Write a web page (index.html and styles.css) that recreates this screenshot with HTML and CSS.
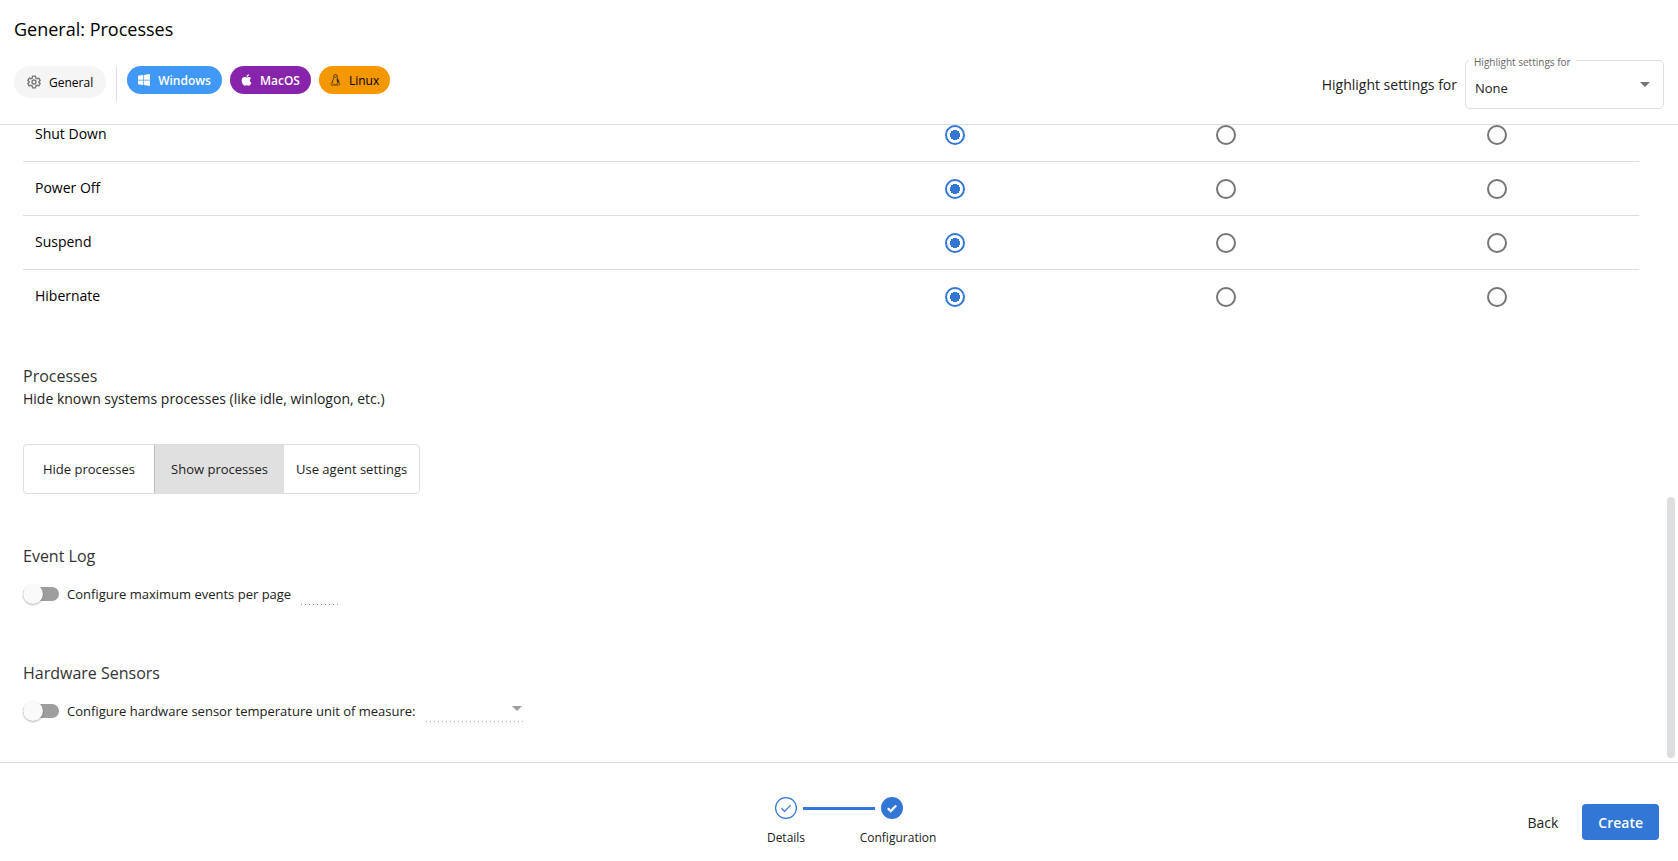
FILE: index.html
```html
<!DOCTYPE html>
<html lang="en">
<head>
    <meta charset="UTF-8">
    <meta name="viewport" content="width=device-width, initial-scale=1.0">
    <link rel="stylesheet" href="styles.css">
    <title>General: Processes</title>
</head>
<body>
    <header class="top">
        <h1>General: Processes</h1>
        <div class="toolbar">
            <div class="chips">
                <button type="button" class="chip general">
                    <svg width="14" height="14" viewBox="0 0 24 24" fill="none" stroke="#777" stroke-width="2.4" stroke-linejoin="round">
                        <path d="M9.6 2h4.8l.7 3.2 2 1.2 3.1-1 2.4 4.1-2.4 2.2v.6l2.4 2.2-2.4 4.1-3.1-1-2 1.2-.7 3.2H9.6l-.7-3.2-2-1.2-3.1 1-2.4-4.1 2.4-2.2v-.6L1.400 9.500l2.400-4.100 3.100 1 2-1.200z"/>
                        <circle cx="12" cy="12" r="3.400"/>
                    </svg>
                    General
                </button>
                <span class="divider"></span>
                <button type="button" class="chip windows">
                    <svg width="12" height="12" viewBox="0 0 12 12" fill="#fff">
                        <path d="M0 1.800l5-.7v4.600H0zM5.700 1L12 .1v5.600H5.700zM0 6.400h5V11l-5-.7zM5.700 6.400H12V12l-6.300-.9z"/>
                    </svg>
                    Windows
                </button>
                <button type="button" class="chip macos">
                    <svg width="11" height="12" viewBox="0 24 384 464" fill="#fff">
                        <path d="M318.700 268.700c-.2-36.700 16.400-64.400 50-84.800-18.800-26.900-47.200-41.700-84.700-44.600-35.500-2.800-74.300 20.700-88.500 20.700-15 0-49.400-19.700-76.400-19.700C63.300 141.200 4 184.800 4 273.500q0 39.300 14.400 81.200c12.800 36.700 59 126.700 107.200 125.200 25.200-.6 43-17.900 75.800-17.900 31.800 0 48.300 17.900 76.400 17.900 48.600-.7 90.400-82.500 102.600-119.300-65.200-30.700-61.700-90-61.700-91.900zm-56.600-164.200c27.300-32.400 24.800-61.900 24-72.500-24.100 1.400-52 16.400-67.900 34.900-17.500 19.800-27.800 44.300-25.600 71.900 26.100 2 49.900-11.400 69.500-34.300z"/>
                    </svg>
                    MacOS
                </button>
                <button type="button" class="chip linux">
                    <svg width="11" height="12" viewBox="0 0 11 12" fill="none" stroke="#33291a">
                        <path d="M3.900 3.800V2.100C3.900 1 4.500.5 5.500.5s1.700.6 1.700 1.700v1.600c.1 1 1.700 2.400 1.700 4.700M3.900 3.800C3.700 5 2.300 6.200 2.300 8.300M4 10.900h3" stroke-width=".9"/>
                        <path d="M4.300 2.800l1.200 1 1.300-1z" fill="#33291a" stroke="none"/>
                        <path d="M7 5l1 3.600" stroke-width="1.200"/>
                        <path d="M2.200 8.300L4 10.500l-.6 1L1 10.800l.2-1.500zM8.900 8.500l-1.600.2-.2 2.300.6.500 2.300-1.300z" stroke-width=".6"/>
                    </svg>
                    Linux
                </button>
            </div>
            <div class="highlight">
                <span>Highlight settings for</span>
                <div class="outlined">
                    <label for="highlight">Highlight settings for</label>
                    <select id="highlight">
                        <option>None</option>
                    </select>
                    <svg class="arrow" width="10" height="5" viewBox="0 0 10 5"><path d="M0 0h10L5 5z" fill="#757575"/></svg>
                </div>
            </div>
        </div>
    </header>

    <main>
        <div class="content">
            <table class="options">
                <tr>
                    <th scope="row">Shut Down</th>
                    <td><input type="radio" name="shutdown" aria-label="Shut Down 1" checked></td>
                    <td><input type="radio" name="shutdown" aria-label="Shut Down 2"></td>
                    <td><input type="radio" name="shutdown" aria-label="Shut Down 3"></td>
                </tr>
                <tr>
                    <th scope="row">Power Off</th>
                    <td><input type="radio" name="poweroff" aria-label="Power Off 1" checked></td>
                    <td><input type="radio" name="poweroff" aria-label="Power Off 2"></td>
                    <td><input type="radio" name="poweroff" aria-label="Power Off 3"></td>
                </tr>
                <tr>
                    <th scope="row">Suspend</th>
                    <td><input type="radio" name="suspend" aria-label="Suspend 1" checked></td>
                    <td><input type="radio" name="suspend" aria-label="Suspend 2"></td>
                    <td><input type="radio" name="suspend" aria-label="Suspend 3"></td>
                </tr>
                <tr>
                    <th scope="row">Hibernate</th>
                    <td><input type="radio" name="hibernate" aria-label="Hibernate 1" checked></td>
                    <td><input type="radio" name="hibernate" aria-label="Hibernate 2"></td>
                    <td><input type="radio" name="hibernate" aria-label="Hibernate 3"></td>
                </tr>
            </table>

            <section class="processes">
                <h2>Processes</h2>
                <p>Hide known systems processes (like idle, winlogon, etc.)</p>
                <div class="toggle-group">
                    <button type="button">Hide processes</button>
                    <button type="button" class="active">Show processes</button>
                    <button type="button">Use agent settings</button>
                </div>
            </section>

            <section class="setting">
                <h2>Event Log</h2>
                <div class="line">
                    <input type="checkbox" class="switch" id="events">
                    <label for="events">Configure maximum events per page</label>
                    <input type="text" class="dotted short" aria-label="Maximum events" disabled>
                </div>
            </section>

            <section class="setting">
                <h2>Hardware Sensors</h2>
                <div class="line">
                    <input type="checkbox" class="switch" id="sensors">
                    <label for="sensors">Configure hardware sensor temperature unit of measure:</label>
                    <div class="dotted-select">
                        <select class="dotted" aria-label="Unit of measure" disabled>
                            <option></option>
                        </select>
                        <svg class="arrow" width="10" height="5" viewBox="0 0 10 5"><path d="M0 0h10L5 5z" fill="#9e9e9e"/></svg>
                    </div>
                </div>
            </section>
        </div>
        <div class="scroll-thumb"></div>
    </main>

    <footer>
        <div class="stepper">
            <div class="step">
                <svg width="22" height="22" viewBox="0 0 22 22" fill="none" stroke="#3277d5">
                    <circle cx="11" cy="11" r="10.400" stroke-width="1.200"/>
                    <path d="M6.500 11.300l3.100 3 6-6.200" stroke-width="1.200"/>
                </svg>
                <span>Details</span>
            </div>
            <div class="bar"></div>
            <div class="step last">
                <svg width="22" height="22" viewBox="0 0 22 22" fill="none">
                    <circle cx="11" cy="11" r="11" fill="#3277d5"/>
                    <path d="M6.800 11.300l2.900 2.800 5.500-5.700" stroke="#fff" stroke-width="2.200"/>
                </svg>
                <span>Configuration</span>
            </div>
        </div>
        <div class="actions">
            <button type="button" class="back">Back</button>
            <button type="button" class="create">Create</button>
        </div>
    </footer>
</body>
</html>
```
FILE: styles.css
```css
* {
    box-sizing: border-box;
}

body {
    margin: 0;
    height: 100vh;
    display: flex;
    flex-direction: column;
    font-family: 'Open Sans', sans-serif;
    font-size: 14px;
    line-height: 20px;
    color: #212121;
    background: #fff;
}

button, select, input {
    font-family: inherit;
    color: inherit;
    margin: 0;
}

button {
    cursor: pointer;
    border: none;
    background: none;
}

/* Header */
.top {
    padding: 17px 14px 15px;
    border-bottom: 1px solid #dcdee0;
}

h1 {
    margin: 0 0 19px;
    font-size: 18px;
    font-weight: 400;
    line-height: 24px;
    color: #000;
}

.toolbar {
    display: flex;
    justify-content: space-between;
}

.chips {
    display: flex;
    align-items: flex-start;
    gap: 8px;
    padding-top: 6px;
}

.chip {
    display: flex;
    align-items: center;
    gap: 8px;
    height: 28px;
    padding: 0 11px;
    border-radius: 16px;
    font-size: 12px;
    font-weight: 600;
    color: #fff;
}

.chip.general {
    height: 32px;
    padding: 0 13px;
    background: #f5f5f5;
    font-weight: 400;
    color: #000;
}

.divider {
    width: 1px;
    height: 36px;
    margin: 0 2px;
    background: #dcdee0;
}

.chip.windows {
    background: #4098f7;
}

.chip.macos {
    background: #8824ab;
}

.chip.linux {
    background: #f59700;
    font-weight: 500;
    color: #000;
}

.highlight {
    display: flex;
    align-items: center;
    gap: 8px;
}

.outlined {
    position: relative;
    width: 199px;
}

.outlined label {
    position: absolute;
    top: -8px;
    left: 4px;
    padding: 0 5px;
    font-size: 10px;
    background: #fff;
    line-height: 20px;
    color: #666;
}

.outlined select {
    display: block;
    appearance: none;
    width: 100%;
    height: 49px;
    padding: 7px 9px 0;
    border: 1px solid #dcdee0;
    border-radius: 5px;
    background: none;
    font-size: 13px;
}

.outlined .arrow {
    position: absolute;
    right: 14px;
    top: 22px;
}

/* Scrolled content */
main {
    position: relative;
    flex: 1;
    min-height: 0;
    overflow: hidden;
}

.content {
    margin-top: -18px;
    padding: 0 39px 0 23px;
}

.options {
    width: 100%;
    border-collapse: collapse;
    table-layout: fixed;
}

.options tr {
    height: 54px;
    border-bottom: 1px solid #dcdee0;
}

.options tr:last-child {
    border-bottom: none;
}

.options th {
    padding: 0 12px;
    text-align: left;
    font-weight: 400;
    color: #000;
}

.options td {
    width: 271px;
    padding: 2px 13px 0 0;
    text-align: center;
}

.options input {
    display: block;
    appearance: none;
    width: 20px;
    height: 20px;
    margin: 0 auto;
    border: 2px solid #757575;
    border-radius: 50%;
}

.options input:checked {
    border-color: #3277d5;
    background: radial-gradient(circle, #3277d5 5px, transparent 5px);
}

h2 {
    margin: 0;
    font-size: 16px;
    font-weight: 400;
    line-height: 24px;
    color: #333;
}

.processes {
    padding: 41px 0 3px;
}

.processes p {
    margin: 0 0 34px;
    line-height: 22px;
}

.toggle-group {
    display: flex;
    width: fit-content;
    border: 1px solid #dcdee0;
    border-radius: 4px;
    overflow: hidden;
}

.toggle-group button {
    min-width: 130px;
    height: 48px;
    padding: 0 12px;
    font-size: 13px;
}

.toggle-group .active {
    border-left: 1px solid #bdbdbd;
    background: #e0e0e0;
}

.setting {
    padding-top: 47px;
}

.line {
    display: flex;
    align-items: center;
    height: 40px;
    margin-top: 6px;
    font-size: 13px;
}

.switch {
    appearance: none;
    position: relative;
    width: 36px;
    height: 14px;
    margin-right: 8px;
    border-radius: 8px;
    background: #9e9e9e;
}

.switch::before {
    content: "";
    position: absolute;
    left: 0;
    top: -3px;
    width: 20px;
    height: 20px;
    border-radius: 50%;
    background: #fafafa;
    box-shadow: 0 1px 2px rgba(0, 0, 0, 0.3);
}

.dotted {
    display: block;
    appearance: none;
    height: 22px;
    padding: 0;
    border: none;
    border-radius: 0;
    background: repeating-linear-gradient(to right, #8f8f8f 0 1px, transparent 1px 4px) bottom / 100% 1px no-repeat;
}

.short {
    width: 38px;
    margin-left: 10px;
}

.dotted-select {
    position: relative;
    width: 98px;
    margin-left: 10px;
}

.dotted-select .dotted {
    width: 100%;
}

.dotted-select .arrow {
    position: absolute;
    right: 2px;
    top: 6px;
}

.scroll-thumb {
    position: absolute;
    right: 3px;
    bottom: 4px;
    width: 8px;
    height: 41%;
    border-radius: 4px;
    background: #dcdee0;
}

/* Footer */
footer {
    display: grid;
    grid-template-columns: 1fr auto 1fr;
    height: 99px;
    border-top: 1px solid #dcdee0;
}

.stepper {
    grid-column: 2;
    display: flex;
    padding-top: 34px;
}

.step {
    display: flex;
    flex-direction: column;
    gap: 9px;
    width: 34px;
    align-items: center;
    font-size: 12px;
}

.step.last span {
    padding-left: 12px;
}

.bar {
    width: 72px;
    height: 3px;
    margin-top: 10px;
    background: #3277d5;
}

.actions {
    display: flex;
    justify-content: flex-end;
    align-items: flex-start;
    gap: 8px;
    padding: 41px 19px 0;
}

.actions button {
    height: 36px;
    padding: 0 16px;
    border-radius: 4px;
    font-size: 14px;
}

.actions .create {
    background: #3277d5;
    font-weight: 600;
    color: #fff;
}
```
